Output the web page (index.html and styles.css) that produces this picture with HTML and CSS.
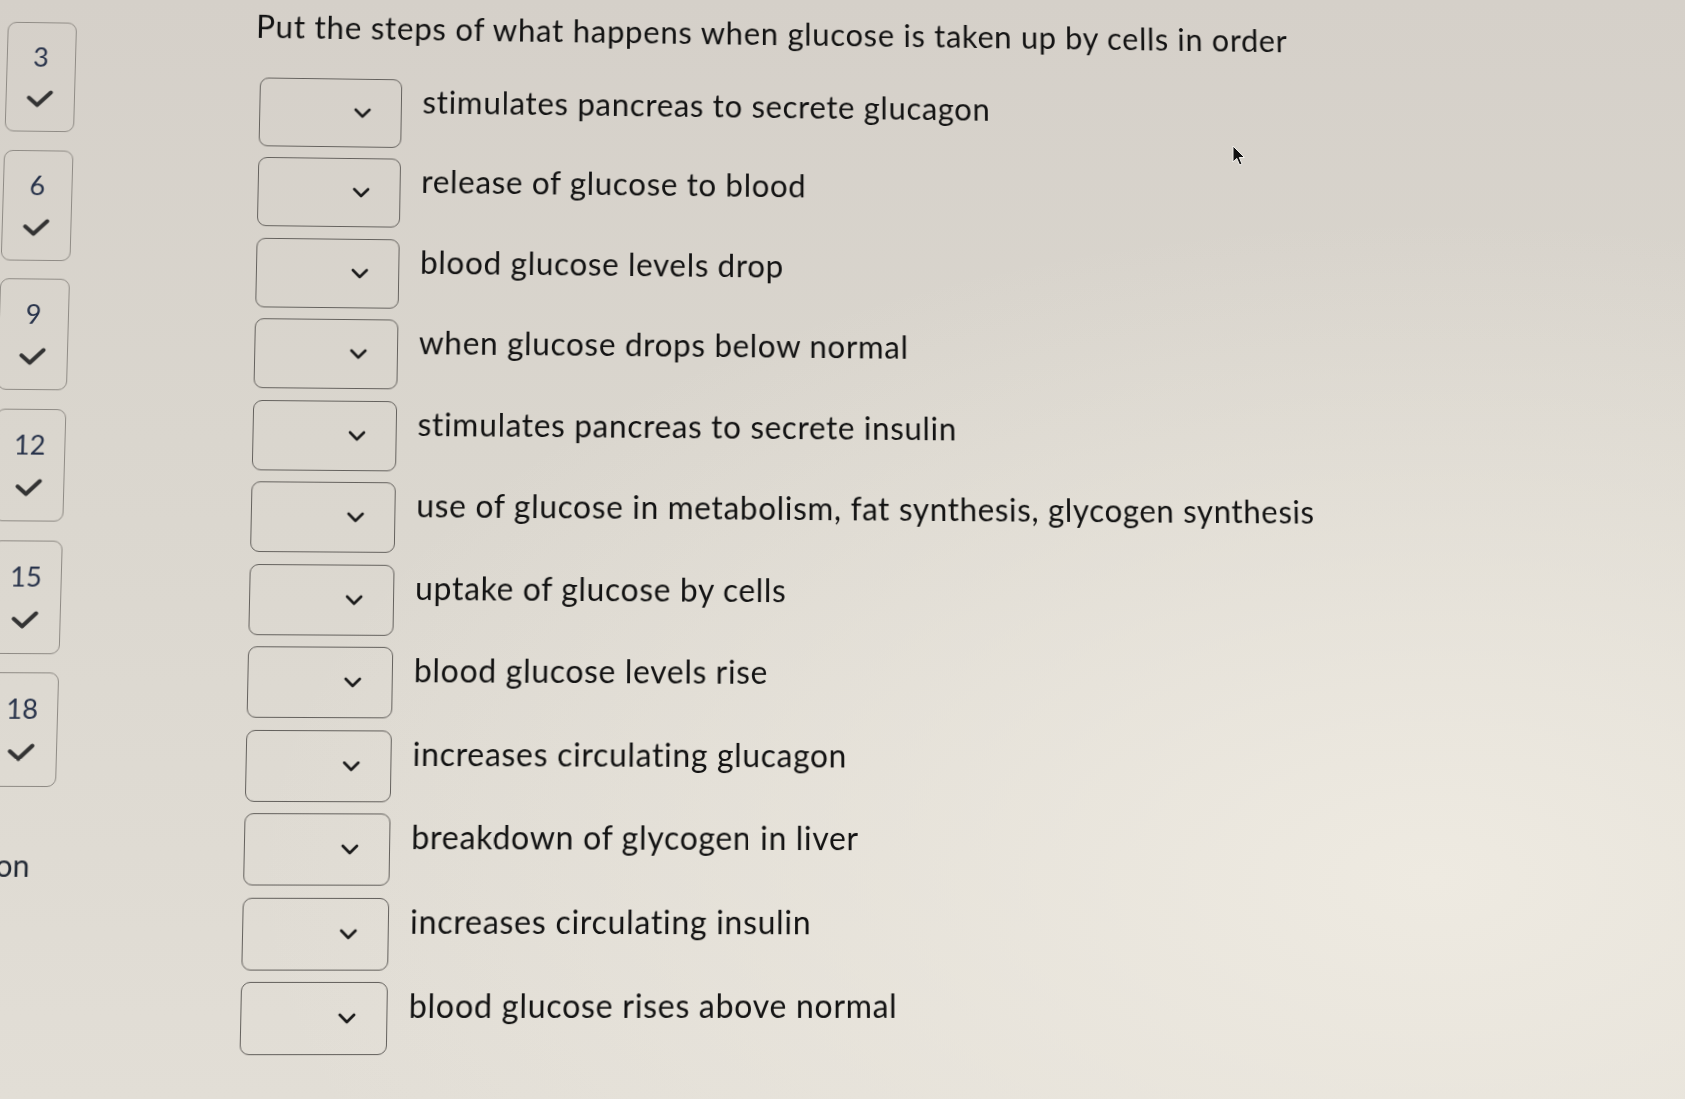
FILE: index.html
```html
<!DOCTYPE html>
<html lang="en">
<head>
<meta charset="utf-8">
<title>Put the steps in order</title>
<link rel="stylesheet" href="styles.css">
</head>
<body>
<div class="screen">
  <div class="stage">
    <div class="tilt">
      <aside class="sidebar">
        <div class="qnav"><span class="qnum">3</span><svg class="check" viewBox="0 0 27 18" width="27" height="18"><path d="M2.5 8 L11 15.5 L24.5 2.5"/></svg></div>
        <div class="qnav"><span class="qnum">6</span><svg class="check" viewBox="0 0 27 18" width="27" height="18"><path d="M2.5 8 L11 15.5 L24.5 2.5"/></svg></div>
        <div class="qnav"><span class="qnum">9</span><svg class="check" viewBox="0 0 27 18" width="27" height="18"><path d="M2.5 8 L11 15.5 L24.5 2.5"/></svg></div>
        <div class="qnav"><span class="qnum">12</span><svg class="check" viewBox="0 0 27 18" width="27" height="18"><path d="M2.5 8 L11 15.5 L24.5 2.5"/></svg></div>
        <div class="qnav"><span class="qnum">15</span><svg class="check" viewBox="0 0 27 18" width="27" height="18"><path d="M2.5 8 L11 15.5 L24.5 2.5"/></svg></div>
        <div class="qnav"><span class="qnum">18</span><svg class="check" viewBox="0 0 27 18" width="27" height="18"><path d="M2.5 8 L11 15.5 L24.5 2.5"/></svg></div>
        <div class="side-label">on</div>
      </aside>
      <main class="content">
        <h1 class="prompt">Put the steps of what happens when glucose is taken up by cells in order</h1>
        <ol class="steps">
          <li class="step"><div class="select"><svg class="chev" viewBox="0 0 18 11" width="18" height="11"><path d="M2 2 L9 9 L16 2"/></svg></div><span class="label">stimulates pancreas to secrete glucagon</span></li>
          <li class="step"><div class="select"><svg class="chev" viewBox="0 0 18 11" width="18" height="11"><path d="M2 2 L9 9 L16 2"/></svg></div><span class="label">release of glucose to blood</span></li>
          <li class="step"><div class="select"><svg class="chev" viewBox="0 0 18 11" width="18" height="11"><path d="M2 2 L9 9 L16 2"/></svg></div><span class="label">blood glucose levels drop</span></li>
          <li class="step"><div class="select"><svg class="chev" viewBox="0 0 18 11" width="18" height="11"><path d="M2 2 L9 9 L16 2"/></svg></div><span class="label">when glucose drops below normal</span></li>
          <li class="step"><div class="select"><svg class="chev" viewBox="0 0 18 11" width="18" height="11"><path d="M2 2 L9 9 L16 2"/></svg></div><span class="label">stimulates pancreas to secrete insulin</span></li>
          <li class="step"><div class="select"><svg class="chev" viewBox="0 0 18 11" width="18" height="11"><path d="M2 2 L9 9 L16 2"/></svg></div><span class="label">use of glucose in metabolism, fat synthesis, glycogen synthesis</span></li>
          <li class="step"><div class="select"><svg class="chev" viewBox="0 0 18 11" width="18" height="11"><path d="M2 2 L9 9 L16 2"/></svg></div><span class="label">uptake of glucose by cells</span></li>
          <li class="step"><div class="select"><svg class="chev" viewBox="0 0 18 11" width="18" height="11"><path d="M2 2 L9 9 L16 2"/></svg></div><span class="label">blood glucose levels rise</span></li>
          <li class="step"><div class="select"><svg class="chev" viewBox="0 0 18 11" width="18" height="11"><path d="M2 2 L9 9 L16 2"/></svg></div><span class="label">increases circulating glucagon</span></li>
          <li class="step"><div class="select"><svg class="chev" viewBox="0 0 18 11" width="18" height="11"><path d="M2 2 L9 9 L16 2"/></svg></div><span class="label">breakdown of glycogen in liver</span></li>
          <li class="step"><div class="select"><svg class="chev" viewBox="0 0 18 11" width="18" height="11"><path d="M2 2 L9 9 L16 2"/></svg></div><span class="label">increases circulating insulin</span></li>
          <li class="step"><div class="select"><svg class="chev" viewBox="0 0 18 11" width="18" height="11"><path d="M2 2 L9 9 L16 2"/></svg></div><span class="label">blood glucose rises above normal</span></li>
        </ol>
      </main>
    </div>
  </div>
</div>
<svg class="cursor" viewBox="0 0 14 22" width="14" height="22"><path d="M1 1 L1 17 L4.8 13.4 L7.6 20 L10 19 L7.3 12.5 L12.5 12.5 Z"/></svg>
</body>
</html>
```

FILE: styles.css
```css
html, body {
  margin: 0;
  padding: 0;
}

body {
  width: 1685px;
  height: 1099px;
  overflow: hidden;
  position: relative;
  font-family: Lato, "Open Sans", "Liberation Sans", sans-serif;
  color: #141414;
  background:
    radial-gradient(ellipse 70% 60% at 85% 80%, rgba(238, 234, 225, 1) 0%, rgba(238, 234, 225, 0) 100%),
    linear-gradient(180deg, #d5d0c9 0%, #dad6ce 40%, #e2ded6 100%);
}

/* The reference is a photo of a screen. Three nested layers reproduce
   the camera's view: a lean (skew), the right side receding (rotateY)
   and the bottom coming closer (rotateX). */
.screen {
  width: 1685px;
  height: 1099px;
  transform-origin: 260px 77px;
  transform: skewX(-1.2deg);
}

.stage {
  width: 1685px;
  height: 1099px;
  transform-origin: 260px 1010px;
  transform: perspective(2000px) rotateY(1.66deg);
}

.tilt {
  width: 1685px;
  height: 1099px;
  display: flex;
  transform-origin: 260px 531px;
  transform: perspective(2000px) rotateX(4deg);
}

/* ---------- left question navigator ---------- */
.sidebar {
  width: 260px;
  flex: none;
  padding: 15px 0 0 2.5px;
  box-sizing: border-box;
  display: flex;
  flex-direction: column;
  gap: 18.7px;
}

.qnav {
  width: 70px;
  height: 113px;
  box-sizing: border-box;
  border: 1.5px solid #8f8b85;
  border-radius: 9px;
  display: flex;
  flex-direction: column;
  align-items: center;
  padding-top: 19px;
  gap: 18px;
}

.qnum {
  font-size: 27px;
  line-height: 32px;
  font-variant-numeric: lining-nums;
  color: #27324a;
}

.check {
  display: block;
}

.check path {
  fill: none;
  stroke: #333333;
  stroke-width: 4;
  stroke-linecap: round;
  stroke-linejoin: round;
}

.side-label {
  margin: 38.5px 0 0 13px;
  font-size: 30px;
  line-height: 36px;
  color: #232a35;
}

/* ---------- main content ---------- */
.content {
  padding: 0;
}

.prompt {
  margin: 0 0 0 -5px;
  font-size: 32px;
  font-weight: 400;
  letter-spacing: 0.75px;
  line-height: 32px;
  color: #121212;
  white-space: nowrap;
}

.steps {
  list-style: none;
  margin: 36.5px 0 0 0;
  padding: 0;
  display: flex;
  flex-direction: column;
  gap: 11.5px;
}

.step {
  display: flex;
  align-items: flex-start;
  gap: 21px;
}

.select {
  width: 145px;
  height: 71px;
  flex: none;
  box-sizing: border-box;
  border: 1.5px solid #64615d;
  border-radius: 9px;
  display: flex;
  align-items: center;
  justify-content: flex-end;
  padding-right: 30px;
}

.chev {
  display: block;
}

.chev path {
  fill: none;
  stroke: #1c1c1c;
  stroke-width: 2.8;
  stroke-linecap: round;
  stroke-linejoin: round;
}

.label {
  padding-top: 4px;
  font-size: 32px;
  letter-spacing: 0.7px;
  line-height: 38px;
  color: #121212;
  white-space: nowrap;
}

/* mouse pointer captured in the photo */
.cursor {
  position: absolute;
  left: 1232px;
  top: 145px;
}

.cursor path {
  fill: #111111;
  stroke: #f2f0ec;
  stroke-width: 1;
  stroke-linejoin: round;
}
```
